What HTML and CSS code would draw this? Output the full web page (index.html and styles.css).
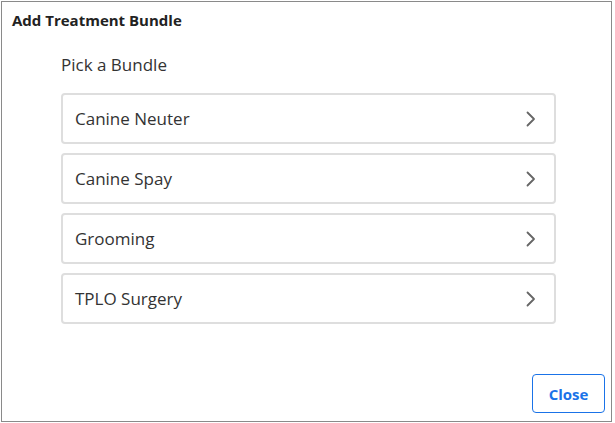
FILE: index.html
```html
<!DOCTYPE html>
<html>
<head>
<meta charset="utf-8">
<link rel="stylesheet" href="styles.css">
</head>
<body>
<div class="dialog">
  <div class="dialog-title">Add Treatment Bundle</div>
  <div class="dialog-body">
    <div class="prompt">Pick a Bundle</div>
    <ul class="bundle-list">
      <li class="bundle"><span>Canine Neuter</span><svg class="chev" width="10" height="16" viewBox="0 0 10 16"><path d="M1.5 1.5 L8 8 L1.5 14.5" fill="none" stroke="#666" stroke-width="1.8" stroke-linecap="round" stroke-linejoin="round"/></svg></li>
      <li class="bundle"><span>Canine Spay</span><svg class="chev" width="10" height="16" viewBox="0 0 10 16"><path d="M1.5 1.5 L8 8 L1.5 14.5" fill="none" stroke="#666" stroke-width="1.8" stroke-linecap="round" stroke-linejoin="round"/></svg></li>
      <li class="bundle"><span>Grooming</span><svg class="chev" width="10" height="16" viewBox="0 0 10 16"><path d="M1.5 1.5 L8 8 L1.5 14.5" fill="none" stroke="#666" stroke-width="1.8" stroke-linecap="round" stroke-linejoin="round"/></svg></li>
      <li class="bundle"><span>TPLO Surgery</span><svg class="chev" width="10" height="16" viewBox="0 0 10 16"><path d="M1.5 1.5 L8 8 L1.5 14.5" fill="none" stroke="#666" stroke-width="1.8" stroke-linecap="round" stroke-linejoin="round"/></svg></li>
    </ul>
  </div>
  <div class="dialog-footer">
    <button class="close-btn">Close</button>
  </div>
</div>
</body>
</html>
```
FILE: styles.css
```css
html, body {
  margin: 0;
  padding: 0;
  background: #fff;
}
body {
  font-family: "Open Sans", "Noto Sans", sans-serif;
  color: #333;
  padding: 1px;
}
.dialog {
  box-sizing: border-box;
  width: 611px;
  height: 421px;
  border: 1px solid #8a8a8a;
  display: flex;
  flex-direction: column;
}
.dialog-title {
  font-size: 15px;
  font-weight: 700;
  color: #222;
  padding: 8px 0 0 10px;
  line-height: 20px;
}
.dialog-body {
  padding: 0 55px 0 59px;
}
.prompt {
  font-size: 17px;
  line-height: 22px;
  margin-top: 24px;
  color: #333;
}
.bundle-list {
  list-style: none;
  margin: 17px 0 0 0;
  padding: 0;
  display: flex;
  flex-direction: column;
  gap: 9px;
}
.bundle {
  box-sizing: border-box;
  height: 51px;
  border: 2px solid #dedede;
  border-radius: 4px;
  display: flex;
  align-items: center;
  justify-content: space-between;
  padding: 0 18px 0 12px;
  font-size: 17px;
  color: #333;
}
.chev {
  display: block;
}
.dialog-footer {
  margin-top: auto;
  display: flex;
  justify-content: flex-end;
  padding: 0 6px 8px 0;
}
.close-btn {
  box-sizing: border-box;
  width: 73px;
  height: 39px;
  border: 1px solid #1a73e8;
  border-radius: 4px;
  background: #fff;
  color: #1a73e8;
  font-family: inherit;
  font-size: 15px;
  font-weight: 700;
}
```
